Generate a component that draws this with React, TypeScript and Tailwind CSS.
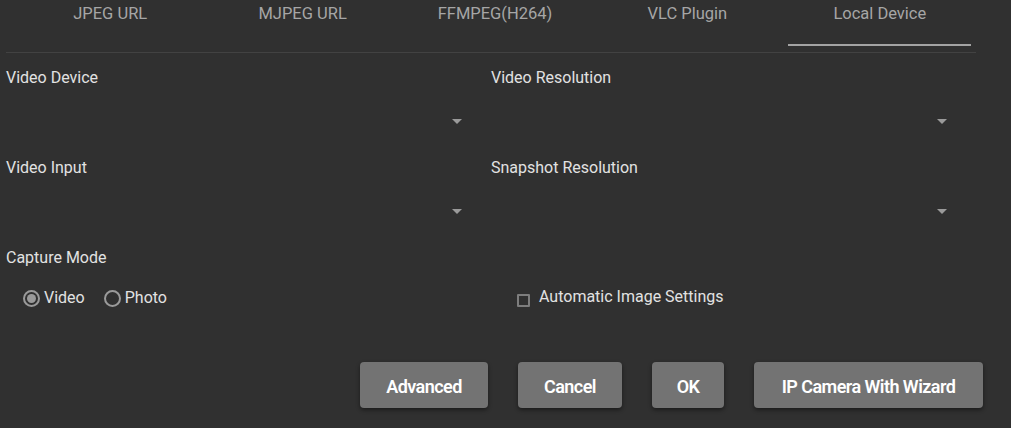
const tabs = ["JPEG URL", "MJPEG URL", "FFMPEG(H264)", "VLC Plugin", "Local Device"];

function Caret() {
  return (
    <svg aria-hidden width="10" height="5" viewBox="0 0 10 5" className="block">
      <path d="M0 0 L10 0 L5 5 Z" fill="#9a9a9a" />
    </svg>
  );
}

function Field({ label }: { label: string }) {
  return (
    <div className="flex h-[90px] flex-col">
      <span className="h-5 text-[16px] leading-5 text-[#e2e2e2]">{label}</span>
      <div className="flex h-[50px] items-end justify-end pb-[14px] pr-[29px]">
        <Caret />
      </div>
    </div>
  );
}

function Button({ children, className }: { children: string; className: string }) {
  return (
    <button
      type="button"
      className={`h-[46px] rounded-[4px] bg-[#737373] pt-[2px] text-[18px] font-semibold tracking-[-0.03em] text-white shadow-[0_2px_4px_rgba(0,0,0,0.45)] ${className}`}
    >
      {children}
    </button>
  );
}

export default function App() {
  return (
    <div
      className="h-[428px] w-[1011px] overflow-hidden bg-[#303030] px-[6px] pt-px"
      style={{ fontFamily: "Roboto, 'Liberation Sans', sans-serif" }}
    >
      {/* Tab strip */}
      <div className="w-[970px]">
        <div className="flex h-[45px] pl-[8px]">
          {tabs.map((t, i) => (
            <div key={t} className="flex w-[193px] flex-col items-center">
              <span className="pt-[3px] text-[16.5px] leading-5 text-[#a6a6a6]">{t}</span>
              {i === tabs.length - 1 && <div className="mt-auto h-[2px] w-[183px] bg-[#a3a3a3]" />}
            </div>
          ))}
        </div>
        <div className="mt-[6px] h-px bg-[#424242]" />
      </div>

      {/* Form */}
      <div className="mt-[15px] grid w-[970px] grid-cols-2">
        <Field label="Video Device" />
        <Field label="Video Resolution" />
        <Field label="Video Input" />
        <Field label="Snapshot Resolution" />
        <div className="flex flex-col">
          <span className="h-5 text-[16px] leading-5 text-[#e2e2e2]">Capture Mode</span>
          <div className="mt-[20px] flex items-center pl-[17px] text-[16px] leading-5 text-[#e2e2e2]">
            <span className="flex h-[17px] w-[17px] items-center justify-center rounded-full border-2 border-[#9a9a9a]">
              <span className="h-[9px] w-[9px] rounded-full bg-[#9a9a9a]" />
            </span>
            <span className="ml-[4px]">Video</span>
            <span className="ml-[19px] h-[17px] w-[17px] rounded-full border-2 border-[#9a9a9a]" />
            <span className="ml-[4px]">Photo</span>
          </div>
        </div>
        <div className="flex flex-col">
          <div className="mt-[39px] flex items-start pl-[26px] text-[16px] leading-5 text-[#e2e2e2]">
            <span className="mt-[7px] h-[13px] w-[13px] rounded-[1px] border-2 border-[#7d7d7d]" />
            <span className="ml-[9px]">Automatic Image Settings</span>
          </div>
        </div>
      </div>

      {/* Actions */}
      <div className="mt-[54px] flex justify-end gap-[30px] pr-[22px]">
        <Button className="w-[128px]">Advanced</Button>
        <Button className="w-[104px]">Cancel</Button>
        <Button className="w-[72px]">OK</Button>
        <Button className="w-[229px]">IP Camera With Wizard</Button>
      </div>
    </div>
  );
}
